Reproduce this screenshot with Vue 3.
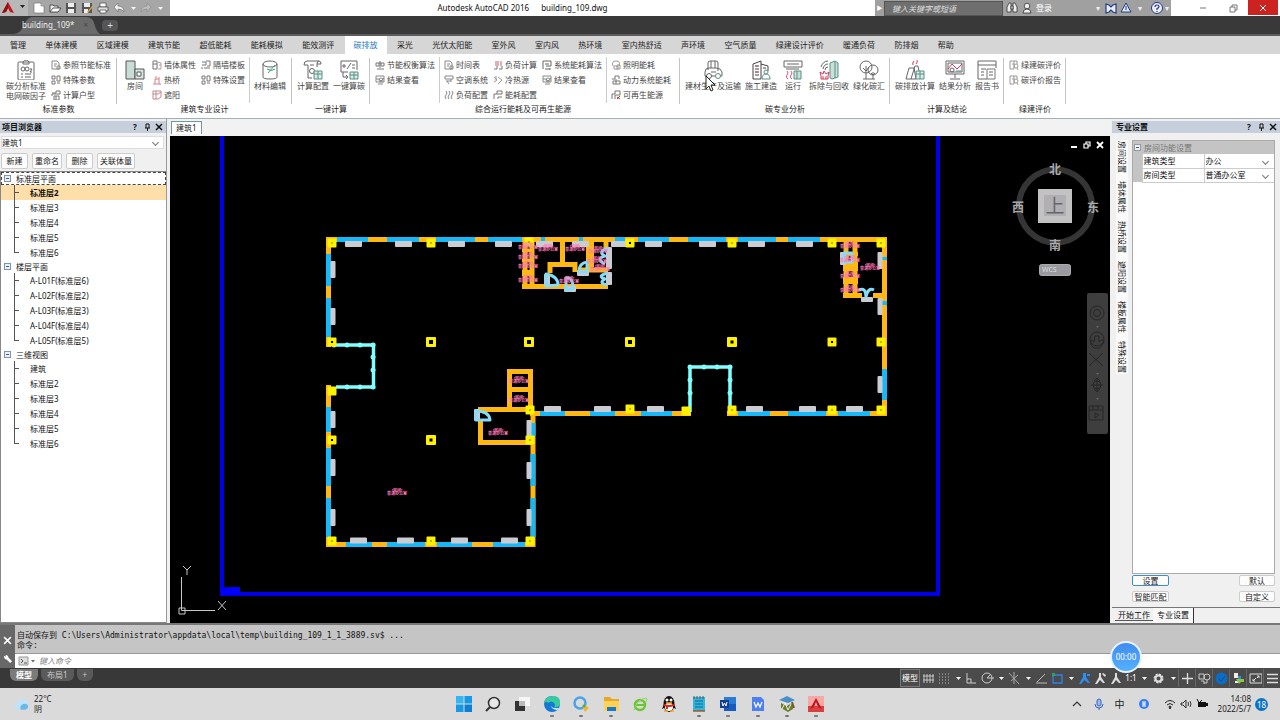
<script setup>
const quick = ['new', 'open', 'save', 'saveas', 'print', 'undo', 'down', 'redo', 'down', 'more']
const ribbonTabs = ['管理', '单体建模', '区域建模', '建筑节能', '超低能耗', '能耗模拟', '能效测评', '碳排放', '采光', '光伏太阳能', '室外风', '室内风', '热环境', '室内热舒适', '声环境', '空气质量', '绿建设计评价', '暖通负荷', '防排烟', '帮助']
const big = (icon, ...lines) => ({ type: 'big', icon, lines })
const col = (...items) => ({ type: 'col', items: items.map(([icon, text]) => ({ icon, text })) })
const sep = { type: 'sep' }
const groups = [
  { title: '标准参数', parts: [big('co2', '碳分析标准', '电网碳因子'), col(['doc', '参照节能标准'], ['param', '特殊参数'], ['house', '计算户型'])] },
  { title: '建筑专业设计', parts: [big('room', '房间'), col(['wall', '墙体属性'], ['bridge', '热桥'], ['shade', '遮阳']), col(['floor', '隔墙楼板'], ['param', '特殊设置']), sep, big('material', '材料编辑')] },
  { title: '一键计算', parts: [big('config', '计算配置'), big('onekey', '一键算碳')] },
  { title: '综合运行能耗及可再生能源', parts: [col(['scale', '节能权衡算法'], ['result', '结果查看']), sep, col(['doc', '时间表'], ['air', '空调系统'], ['heat', '负荷配置']), col(['heatred', '负荷计算'], ['cold', '冷热源'], ['energy', '能耗配置']), col(['system', '系统能耗算法'], ['result', '结果查看']), sep, col(['light', '照明能耗'], ['power', '动力系统能耗'], ['renew', '可再生能源'])] },
  { title: '碳专业分析', parts: [big('produce', '建材生产及运输'), big('build', '施工建造'), big('run', '运行'), big('recycle', '拆除与回收'), big('tree', '绿化碳汇')] },
  { title: '计算及结论', parts: [big('emission', '碳排放计算'), big('analysis', '结果分析'), big('report', '报告书')] },
  { title: '绿建评价', parts: [col(['eval', '绿建碳评价'], ['eval', '碳评价报告'])] }
]
const tree = [
  { name: '标准层平面', items: ['标准层2', '标准层3', '标准层4', '标准层5', '标准层6'] },
  { name: '楼层平面', items: ['A-L01F(标准层6)', 'A-L02F(标准层2)', 'A-L03F(标准层3)', 'A-L04F(标准层4)', 'A-L05F(标准层5)'] },
  { name: '三维视图', items: ['建筑', '标准层2', '标准层3', '标准层4', '标准层5', '标准层6'] }
]
const sideTabs = ['房间设置', '墙体属性', '热桥设置', '遮阳设置', '楼板属性', '特殊设置']

// Plan data in drawing units
const walls = 'M326 239.500H887 M328.500 237V347 M328.500 385V547 M326 544.500H535 M533 411V547 M530 413.500H691 M727 413.500H887 M884.500 237V416'
const innerWalls = 'M525 240V288 M532 240V288 M522 286.500H608 M562.500 240V266 M548 264.500H577 M550 262V273 M575 262V272 M590 240V272 M578 270H608 M606 240V248 M509.500 369V410 M530.500 369V412 M507 371.500H533 M507 389.500H533 M478 409.500H533 M480.500 420V445 M478 442.500H533 M846 240V297 M855 240V297 M843 295.500H862 M873 295.500H886'
const blocks = [[522, 249, 12, 3], [522, 259, 12, 3], [522, 270, 12, 6], [843, 252, 15, 4], [843, 262, 15, 9], [843, 277, 15, 7], [586, 241, 8, 26]]
const glassH = [[239.5, [[337, 368], [387, 419], [436, 475], [488, 522], [541, 545], [579, 583], [615, 625], [638, 669], [688, 726], [738, 776], [788, 820]]], [544.5, [[346, 372], [387, 425], [437, 472], [493, 525]]], [413.5, [[540, 565], [590, 615], [641, 672], [738, 770], [788, 826], [838, 870]]]]
const glassV = [[328.5, [[254, 286], [298, 337], [407, 432], [448, 486], [498, 537]]], [533, [[423, 436], [454, 486], [498, 537]]], [884.5, [[257, 260], [301, 305], [369, 400]]]]
const glass = [
  ...glassH.flatMap(([y, s]) => s.map(([a, b]) => `M${a} ${y}H${b}`)),
  ...glassV.flatMap(([x, s]) => s.map(([a, b]) => `M${x} ${a}V${b}`))
].join('')
const tagsH = [[244, [345, 395, 448, 495, 536, 572, 611, 645, 699, 748, 796]], [540.5, [350, 397, 451, 501]], [409, [544, 594, 647, 746, 799, 846]]].flatMap(([y, xs]) => xs.map(x => [x, y]))
const tagsV = [[333.5, [261, 308, 411, 459, 509]], [529.5, [420, 462, 509]], [880.5, [252, 298, 376]]].flatMap(([x, ys]) => ys.map(y => [x, y]))
const columns = [[332, 243, 1], [431, 243, 1], [529, 242, 1], [630, 243, 2], [732, 243, 1], [832, 243, 1], [881, 243, 1], [332, 342, 2], [332, 391, 0], [881, 342, 1], [530, 410, 1], [630, 409, 1], [686, 411, 0], [732, 410, 1], [832, 410, 1], [881, 410, 1], [332, 440, 2], [530, 440, 1], [332, 541, 1], [431, 541, 1], [530, 541, 1], [431, 342, 4], [529, 342, 4], [630, 342, 4], [732, 342, 3], [832, 342, 2], [431, 440, 3]]
const nodes = [[334, 345], [347, 345], [360, 345], [373, 345], [373, 357], [373, 370], [373, 387], [360, 387], [347, 387], [690, 367], [704, 367], [717, 367], [730, 367], [690, 380], [690, 393], [730, 380], [730, 393]]
const labels = [[397, 492], [519, 380], [519, 399], [498, 432], [528, 246], [528, 256], [528, 265], [528, 279], [548, 248], [575, 248], [569, 280], [597, 260], [600, 268], [598, 250], [850, 245], [850, 259], [850, 275], [850, 289], [870, 267]]
const doors = ['M546 286V274q12 2 12 11z', 'M579 272q0 -9 8 -10v10z', 'M566 290v-12q7 -2 7 11z', 'M608 248q-11 4 -3 8q-10 3 0 8', 'M608 273q-12 3 -3 6q-7 4 2 6', 'M476 411q13 0 14 9h-14z', 'M859 290q7 -3 7 7q2 -10 8 -7', 'M844 253h8v9h-8z']
const doorTags = [[544, 274, 6, 12], [564, 286, 12, 6], [577, 270, 12, 6], [606, 247, 6, 22], [606, 272, 6, 13], [474, 409, 6, 12], [861, 297, 12, 5], [840, 252, 6, 13]]

const status = ['grid', 'snap', 'down', 'ortho', 'polar', 'down', 'iso', 'down', 'track', 'osnap', 'down', 'annoblue', 'anno', 'annoplus']
const taskIcons = ['win', 'search', 'tasks', 'edge', 'qihoo', 'folder', 'ie', 'qq', 'note', 'word', 'wps', 'design', 'acad']
const running = ['edge', 'qihoo', 'folder', 'note', 'word', 'wps', 'design', 'acad']

const g = '<g fill="none" stroke="#666" stroke-width="1">'
const icons = {
  new: '<path d="M1 1h7l3 3v7H1z" fill="#fff" stroke="#666" stroke-width=".6"/><path d="M8 1v3h3" fill="#ccc" stroke="#666" stroke-width=".6"/>',
  open: '<path d="M1 10V3h3l1 1h4v2" fill="#eee" stroke="#333" stroke-width=".8"/><path d="M1 10l3-4h8l-3 4z" fill="#fff" stroke="#333" stroke-width=".8"/>',
  save: '<path d="M1 1h10v10H1z" fill="#555"/><path d="M3 1h6v4H3zM3 7h6v4H3z" fill="#eee"/>',
  saveas: '<path d="M1 1h10v10H1z" fill="#555"/><path d="M3 1h6v4H3zM3 7h4v4H3z" fill="#eee"/><path d="M6 10l5-6 1 1-5 6z" fill="#d8a53b"/>',
  print: '<path d="M3 1h6v4H3z" fill="#fff" stroke="#444" stroke-width=".7"/><path d="M1 5h10v4H1z" fill="#ddd" stroke="#444" stroke-width=".7"/><path d="M3 8h6v3H3z" fill="#fff" stroke="#444" stroke-width=".7"/>',
  undo: '<path d="M1 5l4-4v3q6 0 6 6q-2-3-6-3v3z" fill="#eee" stroke="#666" stroke-width=".6"/>',
  redo: '<path d="M11 5L7 1v3q-6 0-6 6q2-3 6-3v3z" fill="#bbb" stroke="#888" stroke-width=".6"/>',
  down: '<path d="M4 5h5L6.500 8z" fill="#f4f4f4"/>',
  more: '<path d="M3 3h7v1H3zM3 6h7l-3.500 4z" fill="#fff"/>',
  co2: g + '<rect x="2" y="2" width="16" height="18" rx="1"/><path d="M7 2q3-4 6 0v2H7zM5 14h2M9 14h6M5 17h2M9 17h6"/><circle cx="7" cy="9" r="2"/><circle cx="11" cy="9" r="2"/><path d="M14 9h2l-2 3h2"/></g>',
  room: '<path d="M1 1h9v18H1z" fill="#c8dcd8" stroke="#555"/><path d="M10 9h9v10h-9z" fill="#d8e8e4" stroke="#555"/><path d="M12 12h4v4h-4z" fill="#fff" stroke="#555"/>',
  material: g + '<ellipse cx="10" cy="4" rx="7" ry="3"/><path d="M3 4v13q0 2 7 2t7-2V4"/><path d="M8 13l7-8M7 9q5 3 8 0" stroke="#3c9a86"/></g>',
  config: g + '<path d="M4 1h12q2 0 2 3h-4M16 1q-2 0-2 3v3M4 1q-3 0-3 4h4v13h4M7 5h4"/><circle cx="9" cy="11" r="2.500"/><path d="M11 11h8v8h-8z" fill="#d9ebe6" stroke="#5a8f84"/><path d="M11 14h8M15 11v8" stroke="#5a8f84"/></g>',
  onekey: g + '<path d="M9 12H2V1h16v9"/><path d="M5 4v4M3 6h4M8 9l4-6M13 5h3M13 8h3M4 12v5h5M7 15l2 2-2 2"/><path d="M11 12h8v7h-8z" fill="#d9ebe6" stroke="#5a8f84"/><path d="M11 15h8M15 12v7" stroke="#5a8f84"/></g>',
  produce: g + '<path d="M5 10V3q0-2 2-2h6q2 0 2 2v8M8 1v7M12 1v7M2 12q0-4 4-4h7q5 0 6 4v4H2z" fill="#fff"/><circle cx="6" cy="16" r="2.500" fill="#fff"/><circle cx="15" cy="16" r="2.500" stroke="#5a8f84" fill="#fff"/><path d="M8 12h5"/></g>',
  build: g + '<path d="M2 19V4l8-3v18zM10 4l7 2v5M4 6h4M4 9h4M4 12h4M4 15h4M12 8h3" stroke="#444"/><path d="M4 6h3M4 12h3" stroke="#d45a78"/><circle cx="15" cy="12" r="2" stroke="#5a8f84"/><path d="M11 19q0-5 4-5t4 5z" stroke="#5a8f84"/></g>',
  run: g + '<path d="M1 1h18v6H1zM4 4h12M3 9h13"/><path d="M4 11q2 2 0 4t1 4M8 11q2 2 0 4t1 4" stroke="#d45a78"/><path d="M11 11h7v8h-7z" fill="#c8e2da" stroke="#5a8f84"/><path d="M14 11v8" stroke="#5a8f84"/></g>',
  recycle: g + '<path d="M11 3l5-2 3 2v14l-6 2-2-1z" fill="#c8e2da" stroke="#5a8f84"/><path d="M16 2v16" stroke="#5a8f84"/><path d="M2 7q2-6 7-6M4 9q1-5 5-5M6 10q0-3 3-3"/><path d="M1 12l3 2 1-3 2 3 3-2-1 4v3H2v-3zM4 16v3M7 16v3" stroke="#d4375a"/></g>',
  tree: g + '<circle cx="7" cy="7" r="6"/><path d="M7 6v13M4 19h12M4 8l3 3 3-4M14 12v7M12 13l2 2 2-2"/><circle cx="14" cy="10" r="5"/></g>',
  emission: g + '<path d="M1 19l3-11h5l2 11zM6 19l4-13h3l1 5"/><path d="M8 5q-1-2 1-4M11 4q2-2 1-4" stroke="#d4375a"/><path d="M11 11h8v8h-8z" fill="#d9ebe6" stroke="#5a8f84"/><path d="M11 14h8M15 11v8" stroke="#5a8f84"/></g>',
  analysis: g + '<path d="M1 1h18v13H1zM10 14v4M5 19h10M3 3h14v9H3z"/><path d="M3 9l4-5 5 5 5-5" stroke="#d4375a"/><circle cx="7" cy="10" r="2"/><path d="M11 11h5" stroke="#5a8f84"/></g>',
  report: g + '<path d="M10 19H1V1h18v7M1 5h18M4 9h5M4 12h3M4 15h3"/><path d="M10 9h8v10h-8z" stroke="#777"/><path d="M12 12h4M12 15h4"/></g>',
  doc: g.replace('#666', '#888') + '<path d="M1 1h5l2 2v6H1zM3 4h3M3 6h2"/><path d="M6 6h3v3H6z"/></g>',
  param: g.replace('#666', '#777') + '<path d="M1 1h3v3H1zM1 6h3v3H1zM6 1h3v5H6zM6 8h3"/></g>',
  house: g.replace('#666', '#777') + '<path d="M1 3h4V1h4v3H1v2M3 6h5v4H3zM5 6v4"/></g>',
  wall: g.replace('#666', '#777') + '<path d="M1 1h4v8H1zM1 4h4"/><path d="M6 2l3 1v6H6M7 5h2" stroke="#b09a9a"/></g>',
  bridge: g.replace('#666', '#d87c8c') + '<path d="M1 9h8M3 9V4h4v5M4 1v3M7 2v2"/></g>',
  shade: g.replace('#666', '#c08890') + '<path d="M1 1h8v6L6 9H1zM1 4h5M4 1v8M6 4l3-2"/></g>',
  floor: g.replace('#666', '#777') + '<path d="M1 2h4v3H1M5 1h4v5H6M3 8h6M1 9V7"/></g>',
  scale: g.replace('#666', '#777') + '<path d="M5 1v7M1 3h8M1 3v3h3V3M6 3v3h3V3M2 9h7"/></g>',
  result: g.replace('#666', '#888') + '<path d="M1 1h8v6H1zM1 4h3l2 2 3-3M3 9h5"/><circle cx="6" cy="5" r="2"/></g>',
  air: g.replace('#666', '#888') + '<path d="M1 1h8v3H1zM2 6h5M3 6l2 3M7 4v3"/></g>',
  heat: g.replace('#666', '#888') + '<path d="M2 1q2 2 0 4t0 4M5 1q2 2 0 4t0 4M8 1q2 2 0 4t0 4"/></g>',
  heatred: g.replace('#666', '#c06070') + '<path d="M3 1v5M5 1v5M8 1v5"/><path d="M1 9h3V6M6 9h3V6" stroke="#777"/></g>',
  cold: g.replace('#666', '#999') + '<path d="M1 2l3 3-3 2M5 2l4 3-4 4M3 1v4"/></g>',
  energy: g.replace('#666', '#777') + '<path d="M1 9V4h3V1h5v3M4 4h5M5 9V7h4"/></g>',
  system: g + '<path d="M1 9V1h8v5H4M3 4h4M3 9h5M8 8v2"/></g>',
  light: g.replace('#666', '#999') + '<path d="M2 6q-2-5 3-5t3 5M3 9V6h4v3z"/><path d="M6 5h3v4H6z"/></g>',
  power: g.replace('#666', '#777') + '<path d="M1 4h3V1h4v3M2 6h7v3H2zM5 4v5"/></g>',
  renew: g.replace('#666', '#777') + '<path d="M1 9V4h3V1h5v4H4v4"/><path d="M6 7l3 2M9 6L6 9" stroke="#c33"/></g>',
  eval: g.replace('#666', '#999') + '<path d="M1 1h4v8H1zM5 1h3v3M3 4h2"/><circle cx="7" cy="6" r="2"/><path d="M8 8l1 2"/></g>',
  grid: '<path d="M2 2v9M5 2v9M8 2v9M11 2v9M1 4h11M1 8h11" stroke="#ddd" stroke-width=".8"/>',
  snap: '<path d="M1 2h11M1 5h11M1 8h11M1 11h11" stroke="#bbb" stroke-dasharray="1 2" fill="none"/>',
  ortho: '<path d="M2 1v10h9M2 7h4v4" stroke="#ccc" fill="none"/>',
  polar: '<circle cx="6" cy="6" r="5" stroke="#ccc" fill="none"/><path d="M6 6h7M6 6l4-4" stroke="#ccc"/>',
  iso: '<path d="M1 1l10 11M6 0v12M10 3L3 9" stroke="#aaa" fill="none"/>',
  track: '<path d="M2 10L10 2M1 11h11" stroke="#bbb" fill="none"/>',
  osnap: '<path d="M2 3h9v8H2z" stroke="#2e83ee" stroke-width="1.300" fill="none"/><path d="M1 1h3v3H1z" fill="#38a05c"/>',
  annoblue: '<path d="M5 1h3v4l4 6h-2L6.500 8 3 12H1l4-7z" fill="#2f8cf0"/><path d="M9 3h3" stroke="#2f8cf0" stroke-width="2"/>',
  anno: '<path d="M5 1h2v4l4 6H9L6 8l-3 4H1l4-7zM8 2l3 3 1-2-3-2z" fill="#ddd"/>',
  annoplus: '<path d="M5 1h2v4l4 6H9L6 8l-3 4H1l4-7z" fill="#ddd"/>',
  gear: '<circle cx="6.500" cy="6.500" r="4" fill="none" stroke="#ddd" stroke-width="2" stroke-dasharray="2 1.100"/><circle cx="6.500" cy="6.500" r="3" fill="none" stroke="#ddd" stroke-width="2"/>',
  plus: '<path d="M6.500 1v11M1 6.500h11" stroke="#ddd" stroke-width="1.300"/>',
  isolate: '<path d="M1 2h5v5H1zM3 9h3v3" stroke="#ccc" fill="none"/><circle cx="9" cy="5" r="3" stroke="#ccc" fill="none"/><path d="M9 8v3H6" stroke="#ccc" fill="none"/>',
  hardware: '<circle cx="6.500" cy="6.500" r="6" fill="#0c6cc4"/><path d="M4 7l2 2 4-5" stroke="#124f94" fill="none"/>',
  cloud: '<path d="M2 1h4v5H2zM3 9h3v2H3z" fill="#eee"/><path d="M6 4h3v3H6z" fill="#3c8ee0"/><path d="M4 7h8v3H9l-2 2z" fill="#8cc63f"/>',
  full: '<path d="M1 2h12v9H1z" stroke="#ddd" fill="none"/><path d="M4 9l3-3M4 7v2h2M10 4L8 6M8 4h2v2" stroke="#ddd" fill="none"/>',
  menu: '<path d="M1 2.500h11M1 6.500h11M1 10.500h11" stroke="#ddd" stroke-width="1.500"/>',
  win: '<g fill="#1598e5"><path d="M0 0h7.500v7.500H0z" fill="#35b5f2"/><path d="M8.500 0H16v7.500H8.500z"/><path d="M0 8.500h7.500V16H0z"/><path d="M8.500 8.500H16V16H8.500z" fill="#0e80d3"/></g>',
  search: '<circle cx="9" cy="7" r="5.500" fill="#e8e8e8" stroke="#333" stroke-width="1.500"/><path d="M5 11l-4 4" stroke="#333" stroke-width="2"/>',
  tasks: '<path d="M5 1h11v9H5z" fill="#f6f6f6"/><path d="M1 5h10v10H1z" fill="#333"/><path d="M5 5h6v5H5z" fill="#bbb"/>',
  edge: '<circle cx="8" cy="8" r="8" fill="#1478d4"/><path d="M0 8q1-8 9-8t7 8q-1 4-6 3 2-2 0-4-3-3-6 0-2-3-4 1z" fill="#3bc9a0"/><path d="M7 8q-1 5 8 4l-2 2q-7-1-6-6z" fill="#e9f7ff"/>',
  qihoo: '<circle cx="7" cy="7" r="5.500" fill="none" stroke="#4aa3e8" stroke-width="2.500"/><path d="M9 10l3-1 4 3-4 4z" fill="#f3b52c"/><circle cx="11" cy="10" r="1.500" fill="#3bb35b"/>',
  folder: '<path d="M1 1h6l2 2h7v12H1z" fill="#e8a92a"/><path d="M1 5h15v10H1z" fill="#ffd257"/><path d="M4 11h9v4H4z" fill="#1a78c8"/>',
  ie: '<circle cx="8" cy="9" r="5" fill="none" stroke="#6cc534" stroke-width="2.500"/><path d="M4 9h9" stroke="#6cc534" stroke-width="2"/><path d="M2 14Q5 3 14 2q2 0 0 4" stroke="#8cd655" fill="none"/>',
  qq: '<ellipse cx="8" cy="8" rx="5.500" ry="8" fill="#111"/><path d="M3 8l-2 5 2-1zM13 8l2 5-2-1z" fill="#111"/><ellipse cx="8" cy="11" rx="4" ry="4" fill="#fff"/><circle cx="6" cy="4" r="1.500" fill="#fff"/><circle cx="10" cy="4" r="1.500" fill="#fff"/><path d="M5 7h6" stroke="#f5a623" stroke-width="1.500"/><path d="M3 9q5 2 10 0M6 9v4" stroke="#e2231a" stroke-width="2" fill="none"/><path d="M3 15h4M9 15h4" stroke="#f5a623" stroke-width="1.500"/>',
  note: '<path d="M2 1h12v14H2z" fill="#33b4dc"/><path d="M4 5h8M4 8h8M4 11h8" stroke="#0e6a92"/><path d="M3 0v3M6 0v3M9 0v3M12 0v3" stroke="#555"/><path d="M2 15h12" stroke="#a5572d" stroke-width="1.500"/>',
  word: '<path d="M4 1h12v14H4z" fill="#2b7cd3"/><path d="M4 8h12v7H4z" fill="#185abd"/><path d="M0 4h9v8H0z" fill="#103f91"/><path d="M2 6l1 4 1.500-3L6 10l1-4" stroke="#fff" fill="none"/>',
  wps: '<path d="M2 1h9l3 3v11H2z" fill="#4d7ff2"/><path d="M4 6l2 5 2-4 2 4 2-5" stroke="#fff" fill="none" stroke-width="1.200"/>',
  design: '<path d="M0 4l8-4 8 4-7 3z" fill="#4b8fc9"/><path d="M2 7l6 3 6-4v7l-5 3-7-4z" fill="#6b7f2a"/><path d="M3 13l3-6 3 7 4-8" stroke="#eee" fill="none"/><path d="M13 6l2 6" stroke="#7a5533" stroke-width="2"/>',
  acad: '<path d="M0 0h16v16H0z" fill="#f4a9a6"/><path d="M0 10h16v6H0z" fill="#d8413f"/><path d="M8 2l6 11-4-2-2-5-2 5-4 2z" fill="#c3161c"/>'
}
</script>

<template>
  <div class="app">
    <header class="title">
      <div class="quick">
        <button class="logo" aria-label="应用程序菜单">
          <svg viewBox="0 0 28 16"><path d="M8 2l6 11-4-1-2-4-2 4-4 1z" fill="#c8141c" /><path d="M8 2L2 13l4-1 2-4z" fill="#8c1014" /><path d="M20 5h5l-2.500 3z" fill="#222" /></svg>
        </button>
        <button v-for="(q, i) in quick" :key="i" class="qb" :class="{ thin: q === 'down' }" :aria-label="q"><svg viewBox="0 0 13 12" v-html="icons[q]" /></button>
      </div>
      <h1>Autodesk AutoCAD 2016 <span>building_109.dwg</span></h1>
      <div class="info">
        <button class="play" aria-label="展开">▶</button>
        <input type="text" placeholder="键入关键字或短语" aria-label="搜索">
        <button aria-label="查找"><svg viewBox="0 0 12 12"><g fill="#eee" stroke="#333" stroke-width=".8"><path d="M1 10V5l2-4h2v9zM7 10V1h2l2 4v5z" /><path d="M5 4h2v3H5z" /></g></svg></button>
        <button class="login"><svg viewBox="0 0 12 12"><circle cx="6" cy="4" r="2.800" fill="#eee" stroke="#333" stroke-width=".8" /><path d="M2 11q0-4 4-4t4 4z" fill="#eee" stroke="#333" stroke-width=".8" /></svg>登录</button>
        <span class="caret">▾</span>
        <button aria-label="交换"><svg viewBox="0 0 12 12"><path d="M1 2l3 1 2 2 2-2 3-1v9l-3-1-2-2-2 2-3 1z" fill="#e8ecff" stroke="#223a86" stroke-width="1.200" /></svg></button>
        <button aria-label="连接"><svg viewBox="0 0 12 12"><path d="M6 1l5 9H1z" fill="#dfe8ff" stroke="#223a86" /><path d="M6 4v4" stroke="#223a86" /></svg></button>
        <span class="caret near">▾</span>
        <button aria-label="帮助"><svg viewBox="0 0 12 12"><circle cx="6" cy="6" r="5.500" fill="#eef" stroke="#223a86" /><path d="M4 5q0-2 2-2t2 1.500-2 2V8M6 9v1" stroke="#223a86" fill="none" stroke-width="1.200" /></svg></button>
        <span class="caret">▾</span>
      </div>
      <div class="win">
        <button aria-label="最小化"><svg viewBox="0 0 10 10"><path d="M2 5h6" stroke="#777" /></svg></button>
        <button aria-label="还原"><svg viewBox="0 0 10 10"><path d="M2 4h5v5H2zM4 4V2h5v5H7" stroke="#777" fill="none" /></svg></button>
        <button class="close" aria-label="关闭"><svg viewBox="0 0 10 10"><path d="M2 2l6 6M8 2L2 8" stroke="#fff" /></svg></button>
      </div>
    </header>

    <nav class="files">
      <svg class="tabshape" viewBox="0 0 96 19"><path d="M0 19Q8 19 11 11T20 0H82q7 0 9 8t6 11z" fill="#6a6a6a" /></svg>
      <a href="#" class="file">building_109*<span>×</span></a>
      <button class="newfile" aria-label="新建图形">+</button>
    </nav>

    <nav class="tabs">
      <div class="strip"><a v-for="t in ribbonTabs" :key="t" href="#" :class="{ on: t === '碳排放' }">{{ t }}</a></div>
    </nav>

    <section class="ribbon">
      <div v-for="grp in groups" :key="grp.title" class="group">
        <div class="parts">
          <template v-for="(p, i) in grp.parts" :key="i">
            <button v-if="p.type === 'big'" class="big">
              <svg viewBox="0 0 20 20" v-html="icons[p.icon]" />
              <span v-for="l in p.lines" :key="l">{{ l }}</span>
              <svg v-if="p.icon === 'produce'" class="cursor" viewBox="0 0 12 18"><path d="M1 1v13l3-3 2 5 2-1-2-5h4z" fill="#fff" stroke="#222" /></svg>
            </button>
            <div v-else-if="p.type === 'col'" class="col">
              <button v-for="it in p.items" :key="it.text"><svg viewBox="0 0 10 10" v-html="icons[it.icon]" />{{ it.text }}</button>
            </div>
            <i v-else class="sep" />
          </template>
        </div>
        <h2>{{ grp.title }}</h2>
      </div>
    </section>

    <main>
      <aside class="browser">
        <div class="head"><h3>项目浏览器</h3>
          <button aria-label="帮助">?</button>
          <button aria-label="固定"><svg viewBox="0 0 8 8"><path d="M2 5h5M3 5V1h3v4M4.500 5v3" stroke="#111" fill="none" /></svg></button>
          <button aria-label="关闭"><svg viewBox="0 0 8 8"><path d="M1 1l6 6M7 1L1 7" stroke="#111" stroke-width="1.500" /></svg></button>
        </div>
        <div class="sel main-sel"><select aria-label="建筑"><option>建筑1</option></select></div>
        <div class="acts"><button>新建</button><button>重命名</button><button>删除</button><button>关联体量</button></div>
        <ul class="tree">
          <li v-for="(n, i) in tree" :key="n.name">
            <div class="root" :class="{ focus: i === 0 }"><i class="fold" />{{ n.name }}</div>
            <ul><li v-for="(c, j) in n.items" :key="c" :class="{ sel2: i === 0 && j === 0 }">{{ c }}</li></ul>
          </li>
        </ul>
      </aside>

      <section class="doc">
        <div class="doctabs"><a href="#">建筑1</a></div>
        <div class="canvas">
          <svg class="plan" viewBox="170 136 940 487" role="img" aria-label="平面图">
            <path d="M222 136V594H938V136" fill="none" stroke="#0000e6" stroke-width="4" />
            <path d="M222 588l6-1h12v7h-18z" fill="#0000ff" />
            <g fill="none" stroke-width="5">
              <path :d="innerWalls" stroke="#ffb813" />
              <path :d="walls" stroke="#ffb813" />
              <path :d="glass" stroke="#17b8f7" />
            </g>
            <rect v-for="(b, i) in blocks" :key="'b' + i" :x="b[0]" :y="b[1]" :width="b[2]" :height="b[3]" fill="#ffb813" />
            <g fill="#cbcbd2">
              <rect v-for="(t, i) in tagsH" :key="'h' + i" :x="t[0]" :y="t[1] - 3" width="17" height="6" rx="1" />
              <rect v-for="(t, i) in tagsV" :key="'v' + i" :x="t[0] - 3" :y="t[1]" width="5" height="17" rx="1" />
              <rect v-for="(t, i) in doorTags" :key="'d' + i" :x="t[0]" :y="t[1]" :width="t[2]" :height="t[3]" rx="1" />
            </g>
            <g fill="none" stroke="#84dcf8" stroke-width="3" stroke-linejoin="round"><path v-for="d in doors" :key="d" :d="d" /></g>
            <path d="M334 345H373.500V387H336M690 412V367H730V410" fill="none" stroke="#80ffff" stroke-width="3.500" />
            <circle v-for="(n, i) in nodes" :key="'n' + i" :cx="n[0]" :cy="n[1]" r="2.500" fill="#80ffff" />
            <g v-for="(c, i) in columns" :key="'c' + i">
              <rect :x="c[0] - (c[2] > 2 ? 5 : 4.5)" :y="c[1] - (c[2] > 2 ? 5 : 4.5)" :width="c[2] > 2 ? 10 : 9" :height="c[2] > 2 ? 10 : 9" rx="1" fill="#fff200" />
              <rect :x="c[0] - c[2] / 2" :y="c[1] - c[2] / 2" :width="c[2]" :height="c[2]" />
            </g>
            <g class="rooms"><text v-for="(l, i) in labels" :key="'l' + i" :x="l[0]" :y="l[1]">[房间]<tspan :x="l[0]" dy="3">普通办公室</tspan></text></g>
            <g fill="none" stroke="#c8c8c8"><path d="M181.500 577V610.500H215M179 608h6v6h-6zM183 566l4 4 4-4M187 570v5M218 601l8 9M226 601l-8 9" /></g>
            <circle cx="1055.500" cy="206" r="36.500" fill="none" stroke="#353535" stroke-width="6" />
            <path d="M1038 189h34v34h-34z" fill="#c2c2c2" /><path d="M1044 195h22v21h-22z" fill="#b0b0b4" />
            <g class="compass"><text x="1055" y="174">北</text><text x="1018" y="212">西</text><text x="1093" y="212">东</text><text x="1055" y="250">南</text><text class="up" x="1055" y="213">上</text></g>
            <rect x="1039.500" y="264.500" width="31" height="11" rx="2" fill="#9a9aa0" stroke="#aaa" /><text class="wcs" x="1042" y="272">WCS</text>
            <rect x="1087" y="293" width="21" height="141" rx="2" fill="#3e3e3e" />
            <g fill="none" stroke="#262626"><circle cx="1097" cy="313" r="7" /><circle cx="1097" cy="313" r="3.500" /><path d="M1091 345q-1-8 3-3l1-6h4v6q4-4 5 0l-4 6h-6zM1089 353l14 13M1103 353l-14 13M1097 378v14M1091 385h12M1094 381l3-3 3 3M1094 389l3 3 3-3M1089 406h14v14h-14zM1089 410h14M1093 406v4M1098 406v4M1095 413l4 2-4 3z" /><circle cx="1097" cy="339" r="7" /><circle cx="1097" cy="385" r="4" /></g>
            <path d="M1096 326h3l-1.500 2zM1096 373h3l-1.500 2zM1096 398h3l-1.500 2z" fill="#666" />
          </svg>
          <div class="mdi">
            <button aria-label="最小化"><svg viewBox="0 0 8 8"><path d="M1 6h6" stroke="#fff" stroke-width="2" /></svg></button>
            <button aria-label="还原"><svg viewBox="0 0 8 8"><path d="M1 3h4v4H1zM3 3V1h4v4H5" stroke="#fff" fill="none" stroke-width="1.200" /></svg></button>
            <button aria-label="关闭"><svg viewBox="0 0 8 8"><path d="M1 1l6 6M7 1L1 7" stroke="#fff" stroke-width="1.800" /></svg></button>
          </div>
        </div>
      </section>

      <aside class="settings">
        <div class="head"><h3>专业设置</h3>
          <button aria-label="帮助">?</button>
          <button aria-label="固定"><svg viewBox="0 0 8 8"><path d="M2 5h5M3 5V1h3v4M4.500 5v3" stroke="#111" fill="none" /></svg></button>
          <button aria-label="关闭"><svg viewBox="0 0 8 8"><path d="M1 1l6 6M7 1L1 7" stroke="#111" stroke-width="1.500" /></svg></button>
        </div>
        <div class="setbody">
          <nav class="vtabs"><a v-for="s in sideTabs" :key="s" href="#">{{ s }}</a></nav>
          <div class="pane">
            <div class="grid">
              <table>
                <colgroup><col class="c1"><col><col class="c3"></colgroup>
                <thead><tr><th class="gut"><i class="fold gray" /></th><th colspan="2">房间功能设置</th></tr></thead>
                <tbody>
                  <tr><td class="gut" /><td><label for="btype">建筑类型</label></td><td class="val"><div class="sel"><select id="btype"><option>办公</option></select></div></td></tr>
                  <tr><td class="gut" /><td><label for="rtype">房间类型</label></td><td class="val"><div class="sel"><select id="rtype"><option>普通办公室</option></select></div></td></tr>
                </tbody>
              </table>
            </div>
            <div class="pbtns"><button class="def">设置</button><button>默认</button><button>智能匹配</button><button>自定义</button></div>
          </div>
        </div>
        <nav class="btabs"><a href="#">开始工作</a><a href="#" class="on">专业设置</a></nav>
      </aside>
    </main>

    <section class="cmd">
      <div class="grip">
        <button aria-label="关闭"><svg viewBox="0 0 8 8"><path d="M1 1l6 6M7 1L1 7" stroke="#fff" stroke-width="1.400" /></svg></button>
        <button aria-label="自定义"><svg viewBox="0 0 10 10"><path d="M1 2l2 1 0-2q3 0 3 3l4 4-2 2-4-4q-3 0-3-4z" fill="#fff" /></svg></button>
      </div>
      <div class="cmdbody">
        <div class="hist"><p>自动保存到 <code>C:\Users\Administrator\appdata\local\temp\building_109_1_1_3889.sv$ ...</code></p><p>命令:</p></div>
        <div class="prompt"><svg viewBox="0 0 18 10"><path d="M1 1h9v8H1z" fill="#ddd" stroke="#999" /><path d="M3 3l2 2-2 2M6 7h3" stroke="#555" fill="none" /><path d="M13 4h4l-2 2.500z" fill="#666" /></svg><input type="text" placeholder="键入命令" aria-label="命令"></div>
      </div>
    </section>

    <footer class="layout">
      <div class="ltabs"><a href="#" class="on"><span>模型</span></a><a href="#"><span>布局1</span></a><a href="#"><span>+</span></a></div>
      <div class="status">
        <button class="model">模型</button>
        <button v-for="(s, i) in status" :key="i" :class="{ thin: s === 'down' }" :aria-label="s"><svg viewBox="0 0 13 13" v-html="icons[s]" /></button>
        <button class="model ratio">1:1</button>
        <button class="thin" aria-label="比例"><svg viewBox="0 0 13 13" v-html="icons.down" /></button>
        <button class="wide" aria-label="设置"><svg viewBox="0 0 13 13" v-html="icons.gear" /></button>
        <button class="thin" aria-label="工作空间"><svg viewBox="0 0 13 13" v-html="icons.down" /></button>
        <button v-for="s in ['plus', 'isolate', 'hardware', 'cloud', 'full', 'menu']" :key="s" class="box" :aria-label="s"><svg viewBox="0 0 13 13" v-html="icons[s]" /></button>
      </div>
    </footer>

    <footer class="taskbar">
      <div class="weather"><svg viewBox="0 0 16 14"><path d="M3 12q-3-1-2-4 1-2 3-2 1-4 5-4t5 4q2 2 1 4-1 3-4 3H4z" fill="#bfe3fa" /><path d="M7 13q-1-5 3-6t5 2q0 4-4 4z" fill="#6bb6ea" /></svg><p>22°C<br>阴</p></div>
      <div class="apps"><button v-for="t in taskIcons" :key="t" :aria-label="t" :class="{ run: running.includes(t) }"><svg viewBox="0 0 16 16" v-html="icons[t]" /></button></div>
      <div class="tray">
        <svg viewBox="0 0 12 12"><path d="M2 8l4-4 4 4" stroke="#333" fill="none" stroke-width="1.200" /></svg>
        <svg viewBox="0 0 12 12"><rect x="4" y="1" width="4" height="7" rx="2" fill="#9ab8f0" stroke="#3564c0" /><path d="M2 6q0 4 4 4t4-4M6 10v2" stroke="#3564c0" fill="none" /></svg>
        <span class="ime">中</span>
        <svg viewBox="0 0 12 12"><circle cx="6" cy="6" r="5" fill="#3b7cf2" /><path d="M4 4h4M6 4v4M4 8h4M4 6h4" stroke="#fff" /></svg>
        <div class="net">
          <svg viewBox="0 0 12 12"><path d="M1 5q5-5 10 0M3 7q3-3 6 0M4.500 9q1.500-2 3 0" stroke="#222" fill="none" /><circle cx="6" cy="10" r="1" /></svg>
          <svg viewBox="0 0 12 12"><path d="M1 5h2l3-3v8L3 7H1zM8 4q1 2 0 4M10 3q2 3 0 6" stroke="#222" fill="none" stroke-width=".9" /></svg>
          <svg viewBox="0 0 12 12"><path d="M2 4h8v5H2zM10 5h2v3h-2z" fill="#111" /><path d="M1 1l2 4 3-3" stroke="#111" fill="none" /></svg>
        </div>
        <time>14:08<br>2022/5/7</time><b>18</b>
      </div>
    </footer>
    <button class="timer">00:00</button>
  </div>
</template>

<style>
body { overflow: hidden; background: #dadada; }
</style>
<style scoped>
.app { height: 100vh; min-height: 600px; display: flex; flex-direction: column; position: relative; font-family: "Noto Sans", "Noto Sans CJK SC", sans-serif; font-size: 8px; line-height: 10px; color: #222; }
.app * { box-sizing: border-box; }
button, input, select { font: inherit; color: inherit; border: 0; padding: 0; margin: 0; background: none; }
a { color: inherit; text-decoration: none; }
h1, h2, h3, p, ul { margin: 0; padding: 0; font-size: 8px; font-weight: 400; list-style: none; }
svg { display: block; flex: none; }

.title { height: 16px; flex: none; display: flex; background: #fff; }
.quick { width: 170px; display: flex; align-items: center; background: #a6a6a6; gap: 3px; }
.logo { width: 28px; height: 16px; background: #b8b8b8; margin-right: 2px; }
.logo svg { width: 28px; height: 16px; }
.qb { width: 13px; height: 12px; }
.qb svg { width: 13px; height: 12px; }
.qb.thin { width: 8px; display: flex; justify-content: center; }
.title h1 { flex: 1; text-align: center; line-height: 16px; color: #111; white-space: nowrap; }
.title h1 span { margin-left: 10px; }
.info { width: 296px; background: #a0a0a0; display: flex; align-items: center; }
.info .play { width: 9px; font-size: 6px; color: #fff; }
.info input { width: 119px; height: 15px; background: #6f6f6f; border: 1px solid #555; padding: 0 7px; font-style: italic; color: #ddd; }
.info input::placeholder, .prompt input::placeholder { color: inherit; opacity: 1; }
.info svg { width: 12px; height: 12px; }
.info button:not(.play) { margin-left: 3px; }
.info .login { display: flex; align-items: center; gap: 3px; color: #fff; flex: 1; }
.caret { color: #eee; width: 8px; text-align: center; }
.caret.near { width: 16px; }
.win { width: 109px; display: flex; justify-content: flex-end; }
.win button { width: 30px; height: 15px; display: grid; place-items: center; }
.win svg { width: 10px; height: 10px; }
.win .close { background: #cc2321; margin-right: 2px; }

.files { height: 20px; flex: none; background: #393939; border-bottom: 2px solid #5c5c5c; position: relative; display: flex; align-items: center; padding-left: 22px; gap: 12px; color: #eee; }
.tabshape { position: absolute; left: 8px; bottom: 0; width: 96px; height: 17px; }
.file { position: relative; display: flex; gap: 9px; width: 68px; white-space: nowrap; }
.file span { color: #444; }
.newfile { position: relative; width: 16px; height: 11px; background: #555; border-radius: 4px; font-size: 10px; line-height: 10px; color: #ddd; }
.tabs { height: 18px; flex: none; background: #d6d6d6; padding-left: 10px; }
.strip { display: flex; justify-content: space-between; width: 944px; max-width: 100%; }
.strip a { line-height: 18px; white-space: nowrap; }
.strip .on { background: #fff; color: #2a7ab8; padding: 0 9px; margin: 0 -9px; }

.ribbon { height: 65px; flex: none; display: flex; background: #fff; border-bottom: 1px solid #a4b0b6; }
.group { display: flex; flex-direction: column; align-items: center; padding: 3px 5px 0; position: relative; color: #444; }
.group:nth-child(-n+2) { padding: 3px 6px 0; }
.group:nth-child(4) { padding-right: 9px; }
.group::after { content: ""; position: absolute; right: 0; top: 4px; width: 1px; height: 46px; background: #c4c4c4; }
.parts { display: flex; gap: 5px; height: 46px; }
.group h2 { line-height: 10px; margin-top: 1px; color: #222; white-space: nowrap; }
.big { min-width: 24px; position: relative; display: flex; flex-direction: column; align-items: center; align-self: flex-start; line-height: 10px; white-space: nowrap; padding-top: 3px; }
.big > svg:first-child { width: 20px; height: 20px; margin-bottom: 1px; }
.big + .big { margin-left: -1px; }
.big .cursor { position: absolute; left: 20px; top: 18px; width: 12px; height: 18px; }
.col { display: flex; flex-direction: column; }
.col button { display: flex; align-items: center; gap: 2px; height: 15px; white-space: nowrap; }
.col button svg { width: 10px; height: 10px; }
.sep { width: 1px; margin: 0 -1px; background: #ccc; }

main { flex: 1; min-height: 0; display: flex; background: #f0f0f0; }
.head { display: flex; align-items: center; height: 12px; background: #c6cfdb; padding: 0 1px 0 2px; margin-top: 2px; color: #111; }
.head h3 { flex: 1; font-weight: 700; }
.head button { width: 12px; height: 12px; display: grid; place-items: center; font-weight: 700; }
.head svg { width: 8px; height: 8px; }
.browser { width: 167px; flex: none; display: flex; flex-direction: column; border-right: 1px solid #999; }
.sel { position: relative; }
.sel::after { content: ""; position: absolute; right: 5px; top: 3px; width: 4px; height: 4px; border: solid #777; border-width: 0 1px 1px 0; transform: rotate(45deg); pointer-events: none; }
.sel select { appearance: none; display: block; width: 100%; }
.main-sel { margin: 3px 2px 4px 1px; background: #fff; border: 1px solid #ddd; height: 13px; }
.main-sel select { line-height: 11px; height: 11px; }
.acts { display: flex; gap: 4px; padding: 0 1px; margin-bottom: 2px; }
.acts button, .pbtns button { background: #fcfcfc; border: 1px solid #ccc; border-radius: 2px; }
.acts button { height: 16px; padding: 0 2px; min-width: 27px; white-space: nowrap; }
.tree { flex: 1; background: #fff; border: 1px solid #888; border-width: 1px 0 1px 1px; color: #111; }
.root { height: 13px; line-height: 13px; display: flex; align-items: center; padding-left: 3px; gap: 5px; }
.root.focus { outline: 1px dashed #444; outline-offset: -1px; }
.fold { width: 7px; height: 7px; border: 1px solid #7e96b0; background: linear-gradient(#557, #557) center / 3px 1px no-repeat #e8f0f8; }
.fold.gray { display: block; border-color: #999; }
.tree ul li { height: 15px; line-height: 15px; padding-left: 29px; position: relative; }
.tree ul li::before { content: ""; position: absolute; left: 13px; top: 0; width: 1px; height: 15px; background: #555; }
.tree ul li::after { content: ""; position: absolute; left: 13px; top: 7px; width: 5px; height: 1px; background: #555; }
.tree ul li:last-child::before { height: 8px; }
.tree .sel2 { background: #ffdfa9; font-weight: 700; }

.doc { flex: 1; min-width: 0; display: flex; flex-direction: column; padding-left: 3px; }
.doctabs { height: 17px; flex: none; padding: 2px 0 0 1px; background: #f2f2f2; }
.doctabs a { display: inline-block; height: 13px; line-height: 12px; padding: 0 4px; border: 1px solid #6a9aa0; border-bottom: 0; background: #fff; }
.canvas { flex: 1; min-height: 0; background: #000; position: relative; }
.plan { width: 100%; height: 100%; }
.rooms { font-size: 4px; fill: #ff78b8; text-anchor: middle; font-weight: 700; }
.compass { font-size: 12px; fill: #aaa; text-anchor: middle; font-weight: 700; }
.compass .up { font-size: 19px; fill: #666; font-weight: 400; }
.wcs { font-size: 7px; fill: #ddd; }
.mdi { position: absolute; right: 6px; top: 5px; display: flex; gap: 5px; }
.mdi svg { width: 8px; height: 8px; }

.settings { width: 168px; flex: none; margin-left: 2px; display: flex; flex-direction: column; }
.settings .head { padding-left: 4px; }
.setbody { flex: 1; min-height: 0; display: flex; padding: 7px 5px 0 4px; gap: 4px; }
.vtabs { display: flex; flex-direction: column; gap: 8px; background: #fafafa; align-self: flex-start; padding: 1px 0; }
.vtabs a { writing-mode: vertical-rl; text-orientation: sideways; width: 12px; line-height: 12px; color: #111; }
.pane { flex: 1; display: flex; flex-direction: column; }
.grid { flex: 1; background: #fff; border: 1px solid #aaa; }
table { width: 100%; border-collapse: collapse; table-layout: fixed; }
.c1 { width: 9px; }
.c3 { width: 70px; }
th { background: #c4c4c4; color: #777; font-weight: 400; text-align: left; padding: 0 2px; height: 13px; }
td { height: 14px; padding: 0 1px; border: 1px solid #ccc; border-width: 0 0 1px 1px; color: #111; white-space: nowrap; }
.gut { background: #c4c4c4; padding: 0 1px; border: 0; }
.pbtns { display: grid; grid-template-columns: 37px 36px; justify-content: space-between; gap: 5px 0; padding: 1px 0 5px; }
.pbtns button { height: 11px; line-height: 9px; white-space: nowrap; }
.pbtns .def { border-color: #3c8fc0; }
.btabs { display: flex; height: 16px; padding-left: 3px; border-top: 1px solid #777; }
.btabs a { padding: 0 3px; line-height: 13px; height: 13px; border-bottom: 1px solid #555; color: #111; }
.btabs .on { background: #f8f8f8; height: 15px; border: 0; border-right: 1px solid #333; padding: 0 4px; }

.cmd { height: 45px; flex: none; display: flex; border-top: 2px solid #777; background: #c5c5c5; }
.grip { width: 15px; background: #686868; display: flex; flex-direction: column; align-items: center; justify-content: space-around; padding-top: 6px; }
.grip svg { width: 9px; height: 9px; }
.cmdbody { flex: 1; display: flex; flex-direction: column; }
.hist { flex: 1; padding: 6px 2px 0; font-family: "DejaVu Sans Mono", "Noto Sans CJK SC", monospace; color: #111; }
.hist code { font: inherit; }
.prompt { height: 15px; background: #fff; border-top: 1px solid #999; display: flex; align-items: center; gap: 3px; padding-left: 3px; }
.prompt svg { width: 18px; height: 10px; }
.prompt input { flex: 1; font-style: italic; color: #888; }

.layout { height: 20px; flex: none; background: #383838; display: flex; justify-content: space-between; }
.ltabs { display: flex; padding: 1px 0 0 10px; gap: 3px; color: #ccc; }
.ltabs a { height: 12px; padding: 0 6px; background: #5a5a5a; border-radius: 0 0 6px 6px; line-height: 12px; }
.ltabs .on { background: #7b7b7b; color: #fff; font-weight: 700; }
.status { display: flex; background: #4b4b4b; align-items: center; }
.status button { width: 16px; height: 18px; display: grid; place-items: center; }
.status svg { width: 13px; height: 13px; }
.status .thin { width: 11px; }
.status .model { width: 20px; color: #fff; border: 1px solid #777; }
.status .ratio { border: 0; width: 14px; }
.status .wide { width: 18px; }
.status .box { width: 17px; border-left: 1px solid #666; }

.taskbar { height: 32px; flex: none; display: grid; grid-template-columns: 1fr 369px 1fr; align-items: center; background: #dadada; }
.weather { display: flex; align-items: center; gap: 5px; padding-left: 14px; }
.weather svg { width: 15px; height: 14px; }
.apps { display: flex; justify-content: space-between; }
.apps button { position: relative; height: 20px; display: grid; place-items: center; }
.apps svg { width: 16px; height: 16px; }
.apps .run::after { content: ""; position: absolute; bottom: -3px; left: 6px; width: 4px; height: 2px; border-radius: 1px; background: #777; }
.tray { display: flex; align-items: center; justify-content: flex-end; gap: 10px; padding-right: 12px; }
.tray svg { width: 12px; height: 12px; }
.ime { font-size: 10px; margin-right: 3px; }
.net { display: flex; gap: 4px; margin-left: 4px; }
.tray time { text-align: right; }
.tray b { width: 13px; height: 13px; border-radius: 50%; background: #0b73c4; color: #fff; text-align: center; line-height: 13px; font-weight: 400; margin-left: -6px; }
.timer { position: absolute; right: 138px; bottom: 47px; width: 32px; height: 32px; border-radius: 50%; border: 2px solid #e8f4ff; background: linear-gradient(#3f8df0, #55b0ff); color: #fff; }
</style>
